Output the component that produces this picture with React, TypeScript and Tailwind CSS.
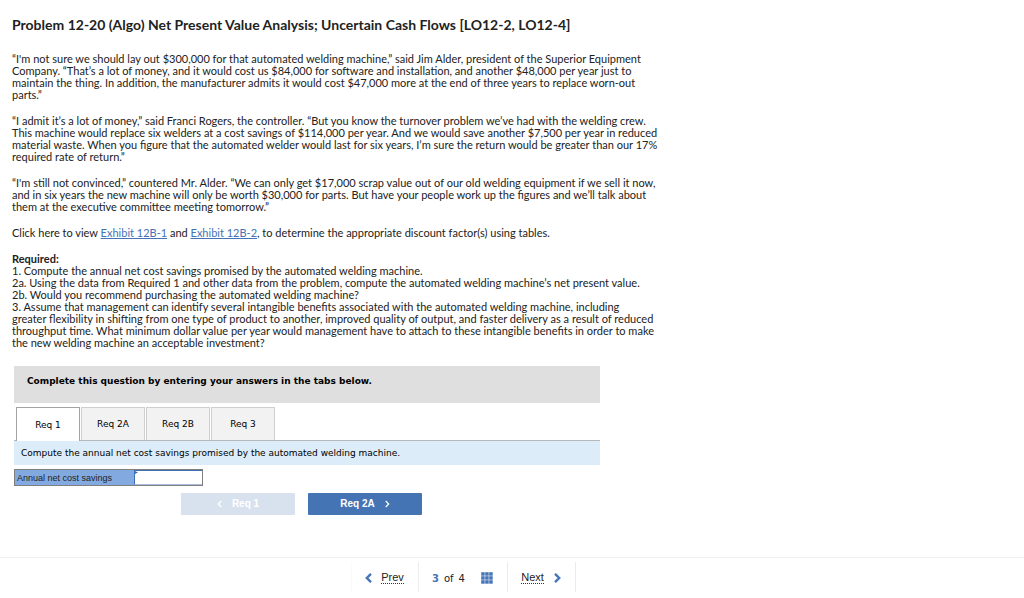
import { useState, type ReactNode } from "react";

const tabs = ["Req 1", "Req 2A", "Req 2B", "Req 3"];

function Chevron({ dir, className }: { dir: "left" | "right"; className: string }) {
  return (
    <svg viewBox="0 0 7 10" className={className} fill="none" stroke="currentColor" aria-hidden="true">
      <path d={dir === "left" ? "M6 .8 1.8 5 6 9.2" : "M1 .8 5.2 5 1 9.2"} />
    </svg>
  );
}

function ExhibitLink({ children }: { children: ReactNode }) {
  return (
    <a href="#exhibit" className="text-[#4472b4] underline underline-offset-1">
      {children}
    </a>
  );
}

function GridIcon() {
  return (
    <svg viewBox="0 0 12 12" className="size-3" fill="#4675b8" aria-hidden="true">
      {[0, 4, 8].map((y) =>
        [0, 4, 8].map((x) => <rect key={`${x}-${y}`} x={x + 0.2} y={y + 0.2} width="3.5" height="3.5" />),
      )}
    </svg>
  );
}

export default function App() {
  const [active, setActive] = useState("Req 1");

  return (
    <div className="flex min-h-screen flex-col bg-white font-['Lato',sans-serif] text-[#222]">
      <main className="grow px-3 pt-4">
        <h1 className="text-[14px] leading-[18px] font-bold">
          Problem 12-20 (Algo) Net Present Value Analysis; Uncertain Cash Flows [LO12-2, LO12-4]
        </h1>

        <div className="mt-[19px] flex flex-col gap-[14px] text-[11px] leading-[12px]">
          <p>
            “I'm not sure we should lay out $300,000 for that automated welding machine,” said Jim Alder, president of the Superior Equipment
            <br />
            Company. “That’s a lot of money, and it would cost us $84,000 for software and installation, and another $48,000 per year just to
            <br />
            maintain the thing. In addition, the manufacturer admits it would cost $47,000 more at the end of three years to replace worn-out
            <br />
            parts.”
          </p>
          <p>
            “I admit it’s a lot of money,” said Franci Rogers, the controller. “But you know the turnover problem we’ve had with the welding crew.
            <br />
            This machine would replace six welders at a cost savings of $114,000 per year. And we would save another $7,500 per year in reduced
            <br />
            material waste. When you figure that the automated welder would last for six years, I’m sure the return would be greater than our 17%
            <br />
            required rate of return.”
          </p>
          <p>
            “I'm still not convinced,” countered Mr. Alder. “We can only get $17,000 scrap value out of our old welding equipment if we sell it now,
            <br />
            and in six years the new machine will only be worth $30,000 for parts. But have your people work up the figures and we’ll talk about
            <br />
            them at the executive committee meeting tomorrow.”
          </p>
          <p>
            Click here to view <ExhibitLink>Exhibit 12B-1</ExhibitLink> and <ExhibitLink>Exhibit 12B-2</ExhibitLink>, to determine the
            appropriate discount factor(s) using tables.
          </p>
          <div>
            <h2 className="font-bold">Required:</h2>
            <p>1. Compute the annual net cost savings promised by the automated welding machine.</p>
            <p>2a. Using the data from Required 1 and other data from the problem, compute the automated welding machine’s net present value.</p>
            <p>2b. Would you recommend purchasing the automated welding machine?</p>
            <p>
              3. Assume that management can identify several intangible benefits associated with the automated welding machine, including
              <br />
              greater flexibility in shifting from one type of product to another, improved quality of output, and faster delivery as a result of reduced
              <br />
              throughput time. What minimum dollar value per year would management have to attach to these intangible benefits in order to make
              <br />
              the new welding machine an acceptable investment?
            </p>
          </div>
        </div>

        <section className="mt-[17px] ml-[2px] w-full max-w-[586px] font-['DejaVu_Sans',sans-serif] text-[9px] leading-[12px] text-black">
          <div className="bg-[#dfdfdf] px-[13px] pt-[9px] pb-4 font-bold">
            Complete this question by entering your answers in the tabs below.
          </div>

          <div role="tablist" className="mt-1 flex gap-px border-b border-[#b4b8bb] px-[2px]">
            {tabs.map((tab) => (
              <button
                key={tab}
                type="button"
                role="tab"
                aria-selected={tab === active}
                onClick={() => setActive(tab)}
                className={
                  tab === active
                    ? "-mb-px h-[34px] w-16 border border-b-0 border-[#a3a3a3] bg-white"
                    : "h-[33px] w-16 border border-b-0 border-[#cfcfcf] bg-[#f2f2f2]"
                }
              >
                {tab}
              </button>
            ))}
          </div>

          <p className="bg-[#dcecf9] px-[7px] py-[6px]">
            Compute the annual net cost savings promised by the automated welding machine.
          </p>

          <div className="mt-[4px] flex w-[189px] border border-[#7f7f7f] font-['Liberation_Sans',sans-serif] text-[9px]">
            <label
              htmlFor="savings"
              className="flex h-[15px] w-[119px] shrink-0 items-center bg-[#82aae0] pl-[2px] whitespace-nowrap text-[#222]"
            >
              Annual net cost savings
            </label>
            <div className="relative min-w-0 grow">
              <input
                id="savings"
                type="text"
                className="block h-[15px] w-full border border-r-0 border-[#3f6fb5] border-b-[#a9bddb] bg-white px-1 text-right outline-none"
              />
              <svg viewBox="0 0 4 4" className="absolute top-px left-px size-[3px]" fill="#3f6fb5" aria-hidden="true">
                <path d="M0 0 4 2 0 4Z" />
              </svg>
            </div>
          </div>

          <div className="mt-[7px] ml-[167px] flex gap-[13px] font-['Liberation_Sans',sans-serif] text-[10px] font-bold text-white">
            <button type="button" disabled className="flex h-[22px] w-[114px] items-center justify-center gap-[10px] rounded-[1px] bg-[#d8e2ee]">
              <Chevron dir="left" className="h-2 w-[5px] stroke-[1.7]" />
              Req 1
            </button>
            <button type="button" className="flex h-[22px] w-[114px] items-center justify-center gap-[10px] rounded-[1px] bg-[#4574b4]">
              Req 2A
              <Chevron dir="right" className="h-2 w-[5px] stroke-[1.7]" />
            </button>
          </div>
        </section>
      </main>

      <footer className="flex justify-center border-t border-[#efefef] pt-1 pr-[98px] pb-[6px]">
        <nav className="flex h-[30px] items-stretch divide-x divide-[#ececec] border-r border-l border-r-[#ececec] border-l-[#fafafa] font-['Liberation_Sans',sans-serif] text-[11px]">
          <a href="#prev" className="flex w-[67px] items-center justify-center gap-[9px] pt-[2px]">
            <Chevron dir="left" className="h-[10px] w-[7px] stroke-[2.4] text-[#4675b8]" />
            <span className="border-b border-dotted border-[#333] leading-[11px]">Prev</span>
          </a>
          <div className="flex w-[89px] items-center justify-center gap-4 pt-[2px]">
            <span className="flex gap-[5px] font-['DejaVu_Sans',sans-serif] text-[10px]">
              <b className="text-[#4675b8]">3</b>
              <span>of</span>
              <span>4</span>
            </span>
            <button type="button" aria-label="Question list">
              <GridIcon />
            </button>
          </div>
          <a href="#next" className="flex w-[67px] items-center justify-center gap-[10px] pt-[2px]">
            <span className="border-b border-dotted border-[#333] leading-[11px]">Next</span>
            <Chevron dir="right" className="h-[10px] w-[7px] stroke-[2.4] text-[#4675b8]" />
          </a>
        </nav>
      </footer>
    </div>
  );
}
